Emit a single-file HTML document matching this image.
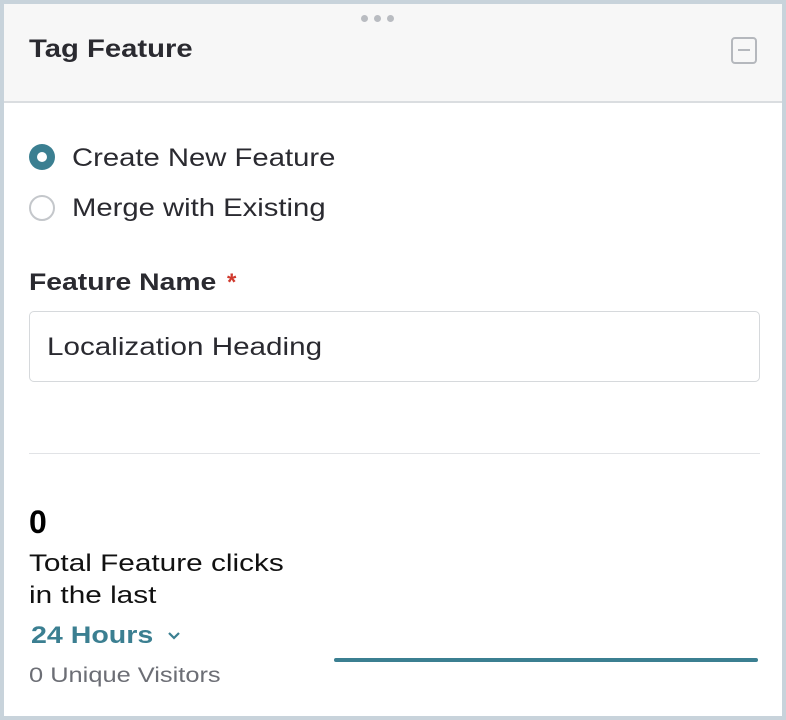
<!DOCTYPE html>
<html><head><style>
*{margin:0;padding:0;box-sizing:border-box}
body{width:786px;height:720px;background:#c8d3db;font-family:"Liberation Sans",sans-serif;color:#2a2a30;position:relative;overflow:hidden}
.card{position:absolute;left:4px;top:4px;width:778px;height:712px;background:#fff}
.hdr{position:absolute;left:0;top:0;width:778px;height:99px;background:#f7f7f7;border-bottom:2px solid #dadde0}
.abs{position:absolute;white-space:nowrap;transform-origin:0 0}
.dot{position:absolute;top:11px;width:7px;height:7px;border-radius:50%;background:#b9bcc1}
</style></head><body>
<div class="card">
<div class="hdr">
<div class="dot" style="left:357px"></div><div class="dot" style="left:370px"></div><div class="dot" style="left:383px"></div>
<div class="abs" style="left:25px;top:31px;font-size:25px;font-weight:bold;transform:scaleX(1.17)">Tag Feature</div>
<div class="abs" style="left:727px;top:33px;width:26px;height:27px;border:2px solid #b5b8bd;border-radius:4px"><div style="position:absolute;left:5px;top:10px;width:12px;height:2px;background:#b5b8bd"></div></div>
</div>
<div class="abs" style="left:25px;top:140px;width:26px;height:26px;border-radius:50%;background:#3b7f91"><div style="position:absolute;left:8px;top:8px;width:10px;height:10px;border-radius:50%;background:#fff"></div></div>
<div class="abs" style="left:68px;top:140px;font-size:25px;transform:scaleX(1.17)">Create New Feature</div>
<div class="abs" style="left:25px;top:191px;width:26px;height:26px;border-radius:50%;border:2px solid #c4c7cb"></div>
<div class="abs" style="left:68px;top:190px;font-size:25px;transform:scaleX(1.17)">Merge with Existing</div>
<div class="abs" style="left:25px;top:265px;font-size:24px;font-weight:bold;transform:scaleX(1.18)">Feature Name</div>
<div class="abs" style="left:223px;top:265px;font-size:24px;font-weight:bold;color:#d03a2e">*</div>
<div class="abs" style="left:25px;top:307px;width:731px;height:71px;border:1.5px solid #d6d9dc;border-radius:5px"></div>
<div class="abs" style="left:43px;top:329px;font-size:25px;transform:scaleX(1.185)">Localization Heading</div>
<div class="abs" style="left:25px;top:449px;width:731px;height:1px;background:#e1e3e6"></div>
<div class="abs" style="left:25px;top:500px;font-size:32px;font-weight:bold;color:#000">0</div>
<div class="abs" style="left:25px;top:544px;font-size:24px;line-height:32px;color:#111;transform:scaleX(1.24)">Total Feature clicks<br>in the last</div>
<div class="abs" style="left:27px;top:618px;font-size:24px;font-weight:bold;color:#3b7f91;transform:scaleX(1.19)">24 Hours</div>
<svg class="abs" style="left:162px;top:627px" width="16" height="10" viewBox="0 0 16 10"><path d="M3 2 L8 7 L13 2" fill="none" stroke="#3b7f91" stroke-width="2.2"/></svg>
<div class="abs" style="left:25px;top:660px;font-size:21px;color:#6c6e75;transform:scaleX(1.21)">0 Unique Visitors</div>
<div class="abs" style="left:330px;top:654px;width:424px;height:4px;background:#3b7f91;border-radius:2px"></div>
</div>
</body></html>
